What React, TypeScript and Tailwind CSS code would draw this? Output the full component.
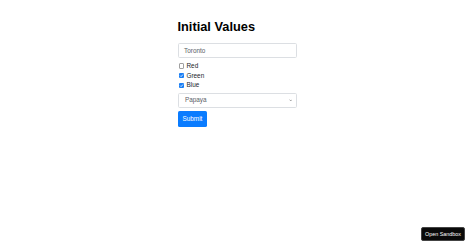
import React from "react";

function Box({ checked }: { checked: boolean }) {
  if (checked) {
    return (
      <span className="ml-[1.6px] mr-[1.6px] flex h-[5.2px] w-[5.2px] items-center justify-center rounded-[1px] bg-[#1a7ff5]">
        <svg viewBox="0 0 10 10" className="h-[5px] w-[5px]">
          <path d="M2.2 5.2 L4.2 7.2 L7.9 3" fill="none" stroke="white" strokeWidth="1.6" />
        </svg>
      </span>
    );
  }
  return (
    <span className="ml-[1.6px] mr-[1.6px] block h-[5.2px] w-[5.2px] rounded-[1px] border-[0.5px] border-[#a0a0a0] bg-white" />
  );
}

export default function App() {
  const items = [
    { label: "Red", checked: false },
    { label: "Green", checked: true },
    { label: "Blue", checked: true },
  ];
  return (
    <div className="min-h-[248px] bg-white" style={{ fontFamily: '"Liberation Sans", Arial, sans-serif' }}>
      <div className="mx-auto flex w-[119px] flex-col pt-[19.2px] text-[#212529]">
        <h2 className="text-[12.8px] font-bold leading-[15.36px] text-black">Initial Values</h2>
        <div className="mt-[8.4px] flex h-[15.2px] items-center rounded-[1.6px] border-[0.6px] border-[#dcdfe3] bg-white pl-[5.6px] text-[6.4px] text-[#5a6168]">
          Toronto
        </div>
        <div className="mt-[3px] flex flex-col">
          {items.map((it) => (
            <div key={it.label} className="flex h-[9.6px] items-center text-[6.4px] leading-[9.6px]">
              <Box checked={it.checked} />
              <span className="ml-[0.6px]">{it.label}</span>
            </div>
          ))}
        </div>
        <div className="mt-[2.7px] flex h-[15.2px] items-center justify-between rounded-[1.6px] border-[0.6px] border-[#dcdfe3] bg-white pl-[6.4px] pr-[3.5px] text-[6.4px] text-[#5a6168]">
          <span>Papaya</span>
          <svg viewBox="0 0 8 6" className="h-[2.5px] w-[3.5px]">
            <path d="M1 1.5 L4 4.5 L7 1.5" fill="none" stroke="#555" strokeWidth="1.3" />
          </svg>
        </div>
        <div className="mt-[3.6px] flex">
          <div className="flex h-[15.2px] items-center rounded-[1.6px] bg-[#0a7cff] px-[5px] text-[6.4px] text-white">
            Submit
          </div>
        </div>
      </div>
      <div className="fixed bottom-[7px] right-[9px] flex h-[14px] w-[44px] items-center justify-center rounded-[2px] border-[0.6px] border-[#444] bg-[#0a0a0a] text-[5.4px] text-white">
        Open Sandbox
      </div>
    </div>
  );
}
